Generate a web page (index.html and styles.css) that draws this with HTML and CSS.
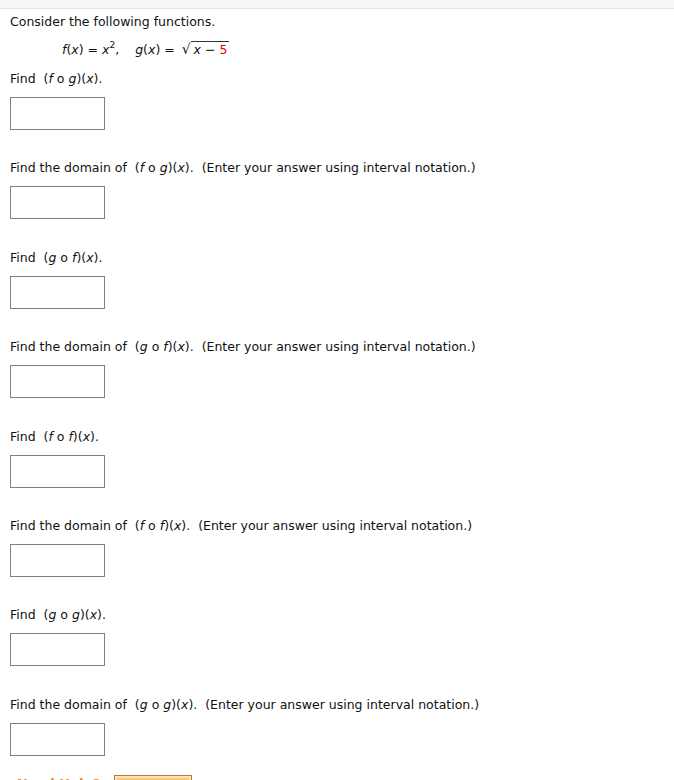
FILE: index.html
```html
<!DOCTYPE html>
<html lang="en">
<head>
  <meta charset="UTF-8" />
  <title>Composite Functions</title>
  <link rel="stylesheet" href="styles.css">
</head>
<body>
  <div class="topbar"></div>

  <div class="question">
    <p class="intro">Consider the following functions.</p>
    <p class="formula">
      <i>f</i>(<i>x</i>) = <i>x</i><sup>2</sup>,<span class="sep"></span><i>g</i>(<i>x</i>) = <span class="radical">√</span><span class="radicand"><i>x</i> − <span class="red">5</span></span>
    </p>

    <div class="part">
      <p>Find &nbsp;(<i>f</i> o <i>g</i>)(<i>x</i>).</p>
      <div class="answer"></div>
    </div>
    <div class="part">
      <p>Find the domain of &nbsp;(<i>f</i> o <i>g</i>)(<i>x</i>). &nbsp;(Enter your answer using interval notation.)</p>
      <div class="answer"></div>
    </div>
    <div class="part">
      <p>Find &nbsp;(<i>g</i> o <i>f</i>)(<i>x</i>).</p>
      <div class="answer"></div>
    </div>
    <div class="part">
      <p>Find the domain of &nbsp;(<i>g</i> o <i>f</i>)(<i>x</i>). &nbsp;(Enter your answer using interval notation.)</p>
      <div class="answer"></div>
    </div>
    <div class="part">
      <p>Find &nbsp;(<i>f</i> o <i>f</i>)(<i>x</i>).</p>
      <div class="answer"></div>
    </div>
    <div class="part">
      <p>Find the domain of &nbsp;(<i>f</i> o <i>f</i>)(<i>x</i>). &nbsp;(Enter your answer using interval notation.)</p>
      <div class="answer"></div>
    </div>
    <div class="part">
      <p>Find &nbsp;(<i>g</i> o <i>g</i>)(<i>x</i>).</p>
      <div class="answer"></div>
    </div>
    <div class="part">
      <p>Find the domain of &nbsp;(<i>g</i> o <i>g</i>)(<i>x</i>). &nbsp;(Enter your answer using interval notation.)</p>
      <div class="answer"></div>
    </div>

    <div class="help">
      <span class="help-label">Need Help?</span>
      <button class="help-btn">Read It</button>
    </div>
  </div>
</body>
</html>
```

FILE: styles.css
```css
body {
  margin: 0;
  background: #fff;
  color: #111;
  font-family: 'DejaVu Sans', Verdana, sans-serif;
  font-size: 12.5px;
  line-height: 16px;
}

.topbar {
  height: 8px;
  background: #f7f7f7;
  border-bottom: 1px solid #e4e4e4;
}

.question {
  padding: 5px 10px 0;
}

p {
  margin: 0;
}

.intro {
  margin-bottom: 11px;
}

.formula {
  padding-left: 52px;
  margin-bottom: 13px;
}

.sep {
  display: inline-block;
  width: 16px;
}

sup {
  font-size: 9px;
  line-height: 0;
  vertical-align: 6px;
}

.radical {
  font-size: 14px;
  margin-left: 3px;
}

.radicand {
  border-top: 1px solid #333;
  padding: 0 2px 0 3px;
}

.red {
  color: #e00;
}

.part {
  margin-bottom: 30.4px;
}

.part p {
  margin-bottom: 10px;
}

.answer {
  width: 93px;
  height: 31px;
  border: 1px solid #808080;
}

.help {
  display: flex;
  align-items: flex-start;
  gap: 14px;
  margin-top: -11px;
  padding-left: 7px;
}

.help-label {
  color: #f08a1c;
  font-weight: bold;
  font-size: 13px;
  padding-top: 1px;
}

.help-btn {
  width: 78px;
  height: 24px;
  border: 1px solid #b97a3c;
  background: #fcc57c;
  box-shadow: inset 0 0 0 2px #fde2b5;
  font-family: 'DejaVu Sans', Verdana, sans-serif;
  font-size: 11px;
  color: #333;
}
```
